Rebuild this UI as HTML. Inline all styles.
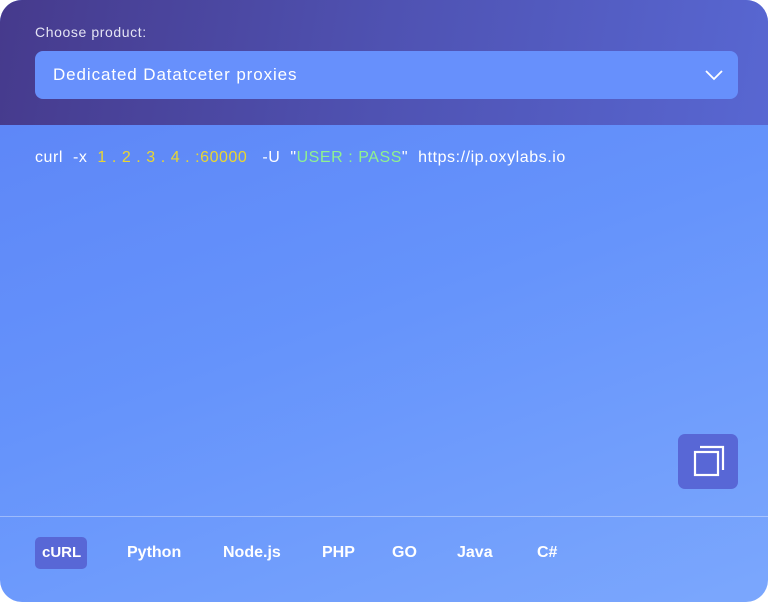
<!DOCTYPE html>
<html><head><style>
html,body{margin:0;padding:0;background:#fff;}
body{width:768px;height:602px;overflow:hidden;font-family:"Liberation Sans",sans-serif;}
.card{position:absolute;left:0;top:0;width:768px;height:602px;border-radius:22px;overflow:hidden;
background:linear-gradient(160deg,#5b82f6 0%,#6593fb 50%,#7ba7fd 100%);}
.head{position:absolute;left:0;top:0;width:768px;height:125px;background:linear-gradient(100deg,#463a8c 0%,#4f52b2 50%,#5867d2 100%);}
.lbl{position:absolute;left:35px;top:24px;color:#e4e4f4;font-size:14px;letter-spacing:0.6px;}
.sel{position:absolute;left:35px;top:51px;width:703px;height:48px;border-radius:8px;background:#6790fc;}
.sel span{position:absolute;left:18px;top:14px;color:#fff;font-size:17px;letter-spacing:0.9px;}
.code{position:absolute;left:35px;top:149px;font-size:16px;letter-spacing:0.55px;color:#fff;white-space:pre;}
.y{color:#e9d632}.g{color:#8ff28f}
.copy{position:absolute;left:678px;top:434px;width:60px;height:55px;border-radius:7px;background:#5867d6;}
.sep{position:absolute;left:0;top:516px;width:768px;height:1px;background:rgba(255,255,255,0.35);}
.tab{position:absolute;top:544px;color:#fff;font-size:16px;font-weight:bold;}
.act{position:absolute;left:35px;top:537px;width:52px;height:32px;border-radius:5px;background:#5867d6;}
</style></head><body>
<div class="card">
<div class="head"></div>
<div class="lbl">Choose product:</div>
<div class="sel"><span>Dedicated Datatceter proxies</span>
<svg style="position:absolute;right:15px;top:18px" width="18" height="12" viewBox="0 0 18 12"><path d="M1 2 L9 10 L17 2" stroke="#fff" stroke-width="1.8" fill="none"/></svg></div>
<div class="code">curl  -x  <span class="y">1 . 2 . 3 . 4 . :60000</span>   -U  "<span class="g">USER : PASS</span>"  https://ip.oxylabs.io</div>
<div class="copy"><svg width="60" height="55" viewBox="0 0 60 55"><rect x="17" y="18" width="23" height="23" stroke="#fff" stroke-width="2.2" fill="none"/><path d="M22 13 H45 V36" stroke="#fff" stroke-width="2.2" fill="none"/></svg></div>
<div class="sep"></div>
<div class="act"></div>
<div class="tab" style="left:42px;font-size:15px">cURL</div>
<div class="tab" style="left:127px">Python</div>
<div class="tab" style="left:223px">Node.js</div>
<div class="tab" style="left:322px">PHP</div>
<div class="tab" style="left:392px">GO</div>
<div class="tab" style="left:457px">Java</div>
<div class="tab" style="left:537px">C#</div>
</div>
</body></html>
